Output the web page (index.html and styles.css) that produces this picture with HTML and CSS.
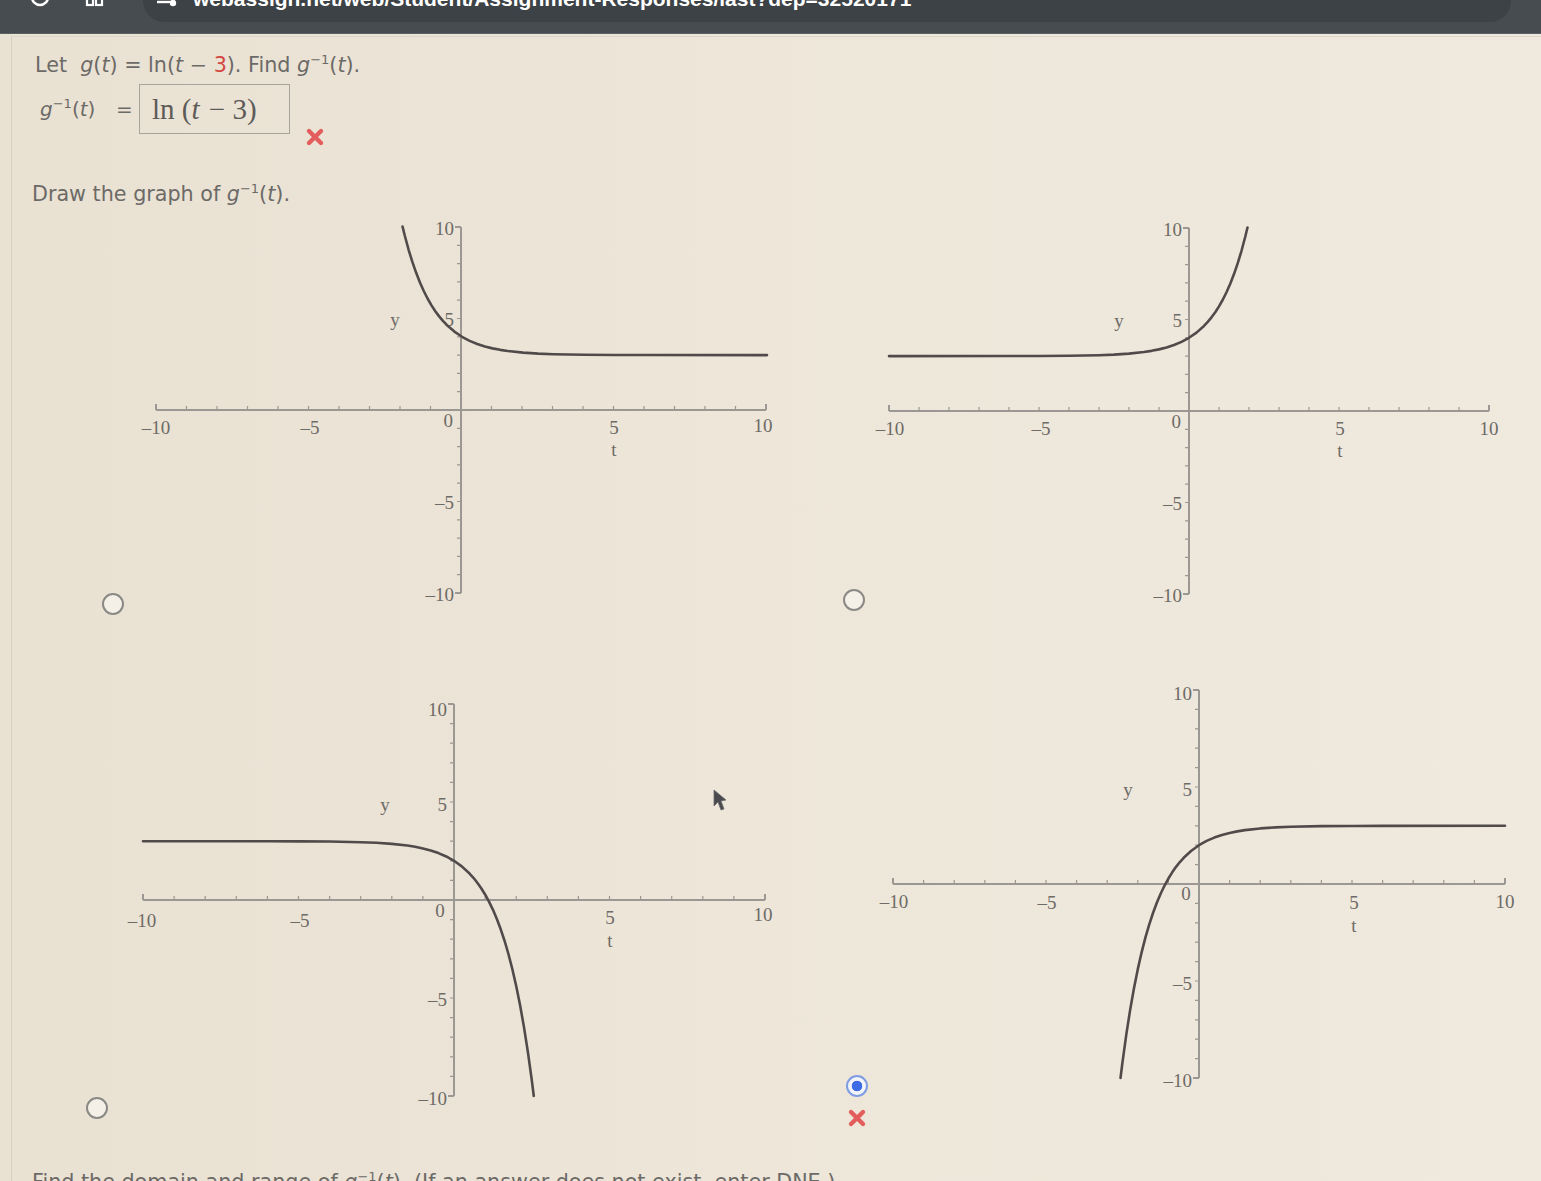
FILE: index.html
```html
<!DOCTYPE html>
<html lang="en">
<head>
<meta charset="utf-8">
<title>WebAssign</title>
<link rel="stylesheet" href="styles.css">
</head>
<body>
<header class="topbar">
  <svg class="tb-reload" width="24" height="33" viewBox="0 0 24 33"><circle cx="12" cy="-3" r="8" fill="none" stroke="#fff" stroke-width="2.6"/></svg>
  <svg class="tb-tabs" width="20" height="33" viewBox="0 0 20 33"><rect x="2" y="-8" width="6" height="13" fill="none" stroke="#fff" stroke-width="2.2"/><rect x="11" y="-8" width="6" height="13" fill="none" stroke="#fff" stroke-width="2.2"/></svg>
  <div class="address">
    <svg class="site-icon" width="26" height="42" viewBox="0 0 26 42"><path d="M4 22 H18" stroke="#fff" stroke-width="2.4"/><path d="M4 17 H14" stroke="#fff" stroke-width="2.4"/><circle cx="20" cy="23" r="3.2" fill="#fff"/></svg>
    <span class="url">webassign.net/web/Student/Assignment-Responses/last?dep=32520171</span>
  </div>
</header>

<main class="panel">
  <p class="q-line">Let &nbsp;<i>g</i>(<i>t</i>) = ln(<i>t</i> &minus; <span class="red">3</span>). Find <i>g</i><sup>&minus;1</sup>(<i>t</i>).</p>

  <div class="answer-row">
    <span class="answer-label"><i>g</i><sup>&minus;1</sup>(<i>t</i>) &nbsp;=</span>
    <span class="answer-box">ln (<i>t</i> &minus; 3)</span>
    <svg class="wrong wrong-first" width="20" height="20" viewBox="0 0 20 20"><path d="M4 4 L16 16 M16 4 L4 16" stroke="#e35d5d" stroke-width="4.4" stroke-linecap="round"/></svg>
  </div>

  <p class="q-line draw-line">Draw the graph of <i>g</i><sup>&minus;1</sup>(<i>t</i>).</p>

  <div class="options">
    <!-- Option 1 -->
    <div class="option opt1">
      <span class="radio"></span>
      <svg class="graph" width="660" height="400" viewBox="130 215 660 400">
        <g class="axis">
          <line x1="156" y1="410" x2="766" y2="410"/>
          <line x1="461" y1="227" x2="461" y2="593"/>
          <line x1="455" y1="227" x2="461" y2="227"/>
          <line x1="455" y1="593" x2="461" y2="593"/>
          <line x1="156" y1="404" x2="156" y2="410"/>
          <line x1="766" y1="404" x2="766" y2="410"/>
          <line class="ticks" x1="155.4" y1="408" x2="767" y2="408" stroke-dasharray="1.2 29.3"/>
          <line class="ticks" x1="459" y1="226.4" x2="459" y2="594" stroke-dasharray="1.2 17.1"/>
        </g>
        <g class="lbl">
          <text x="454" y="228" text-anchor="end">10</text>
          <text x="454" y="319" text-anchor="end">5</text>
          <text x="454" y="502" text-anchor="end">&ndash;5</text>
          <text x="454" y="594" text-anchor="end">&ndash;10</text>
          <text x="453" y="420" text-anchor="end">0</text>
          <text x="156" y="427" text-anchor="middle">&ndash;10</text>
          <text x="310" y="427" text-anchor="middle">&ndash;5</text>
          <text x="614" y="427" text-anchor="middle">5</text>
          <text x="763" y="425" text-anchor="middle">10</text>
          <text x="614" y="449" text-anchor="middle">t</text>
          <text x="395" y="319" text-anchor="middle">y</text>
        </g>
        <path class="curve" transform="translate(462,410) scale(30.5,-18.3)" d="M-1.95,10.03 L-1.875,9.521 L-1.75,8.755 L-1.625,8.078 L-1.5,7.482 L-1.375,6.955 L-1.25,6.490 L-1.125,6.080 L-1,5.718 L-0.875,5.399 L-0.75,5.117 L-0.625,4.868 L-0.5,4.649 L-0.25,4.284 L0,4 L0.25,3.779 L0.5,3.607 L0.75,3.472 L1,3.368 L1.25,3.287 L1.5,3.223 L2,3.135 L2.5,3.082 L3,3.050 L4,3.018 L5,3.007 L6,3.002 L10,3"/>
      </svg>
    </div>

    <!-- Option 2 -->
    <div class="option opt2">
      <span class="radio"></span>
      <svg class="graph" width="660" height="400" viewBox="870 215 660 400">
        <g class="axis">
          <line x1="889" y1="411" x2="1489" y2="411"/>
          <line x1="1189" y1="228" x2="1189" y2="594"/>
          <line x1="1183" y1="228" x2="1189" y2="228"/>
          <line x1="1183" y1="594" x2="1189" y2="594"/>
          <line x1="889" y1="405" x2="889" y2="411"/>
          <line x1="1489" y1="405" x2="1489" y2="411"/>
          <line class="ticks" x1="888.4" y1="409" x2="1490" y2="409" stroke-dasharray="1.2 28.8"/>
          <line class="ticks" x1="1187" y1="227.4" x2="1187" y2="595" stroke-dasharray="1.2 17.1"/>
        </g>
        <g class="lbl">
          <text x="1182" y="229" text-anchor="end">10</text>
          <text x="1182" y="320" text-anchor="end">5</text>
          <text x="1182" y="503" text-anchor="end">&ndash;5</text>
          <text x="1182" y="595" text-anchor="end">&ndash;10</text>
          <text x="1181" y="421" text-anchor="end">0</text>
          <text x="890" y="428" text-anchor="middle">&ndash;10</text>
          <text x="1041" y="428" text-anchor="middle">&ndash;5</text>
          <text x="1340" y="428" text-anchor="middle">5</text>
          <text x="1489" y="428" text-anchor="middle">10</text>
          <text x="1340" y="450" text-anchor="middle">t</text>
          <text x="1119" y="320" text-anchor="middle">y</text>
        </g>
        <path class="curve" transform="translate(1189,411) scale(-30,-18.3)" d="M-1.95,10.03 L-1.875,9.521 L-1.75,8.755 L-1.625,8.078 L-1.5,7.482 L-1.375,6.955 L-1.25,6.490 L-1.125,6.080 L-1,5.718 L-0.875,5.399 L-0.75,5.117 L-0.625,4.868 L-0.5,4.649 L-0.25,4.284 L0,4 L0.25,3.779 L0.5,3.607 L0.75,3.472 L1,3.368 L1.25,3.287 L1.5,3.223 L2,3.135 L2.5,3.082 L3,3.050 L4,3.018 L5,3.007 L6,3.002 L10,3"/>
      </svg>
    </div>

    <!-- Option 3 -->
    <div class="option opt3">
      <span class="radio"></span>
      <svg class="graph" width="675" height="440" viewBox="115 680 675 440">
        <g class="axis">
          <line x1="143" y1="900" x2="765" y2="900"/>
          <line x1="454" y1="704" x2="454" y2="1096"/>
          <line x1="448" y1="704" x2="454" y2="704"/>
          <line x1="448" y1="1096" x2="454" y2="1096"/>
          <line x1="143" y1="894" x2="143" y2="900"/>
          <line x1="765" y1="894" x2="765" y2="900"/>
          <line class="ticks" x1="142.4" y1="898" x2="766" y2="898" stroke-dasharray="1.2 29.9"/>
          <line class="ticks" x1="452" y1="703.4" x2="452" y2="1097" stroke-dasharray="1.2 18.4"/>
        </g>
        <g class="lbl">
          <text x="447" y="709" text-anchor="end">10</text>
          <text x="447" y="804" text-anchor="end">5</text>
          <text x="447" y="999" text-anchor="end">&ndash;5</text>
          <text x="447" y="1098" text-anchor="end">&ndash;10</text>
          <text x="440" y="910" text-anchor="middle">0</text>
          <text x="142" y="920" text-anchor="middle">&ndash;10</text>
          <text x="300" y="920" text-anchor="middle">&ndash;5</text>
          <text x="610" y="917" text-anchor="middle">5</text>
          <text x="763" y="914" text-anchor="middle">10</text>
          <text x="610" y="940" text-anchor="middle">t</text>
          <text x="385" y="804" text-anchor="middle">y</text>
        </g>
        <path class="curve" transform="translate(454,900) scale(-31.1,-19.6)" d="M-2.565,-10 L-2.5,-9.18 L-2.375,-7.75 L-2.25,-6.488 L-2.125,-5.373 L-2,-4.389 L-1.875,-3.521 L-1.75,-2.755 L-1.625,-2.078 L-1.5,-1.482 L-1.375,-0.955 L-1.25,-0.490 L-1.125,-0.080 L-1,0.282 L-0.875,0.601 L-0.75,0.883 L-0.625,1.132 L-0.5,1.351 L-0.25,1.716 L0,2 L0.25,2.221 L0.5,2.393 L0.75,2.528 L1,2.632 L1.25,2.713 L1.5,2.777 L2,2.865 L2.5,2.918 L3,2.950 L4,2.982 L5,2.993 L6,2.998 L10,3"/>
        <path class="cursor" d="M714 790 L714 806 L718 802 L721 810 L724 809 L721 801 L726 800 Z"/>
      </svg>
    </div>

    <!-- Option 4 -->
    <div class="option opt4">
      <span class="marks">
        <span class="radio selected"></span>
        <svg class="wrong" width="20" height="20" viewBox="0 0 20 20"><path d="M4 4 L16 16 M16 4 L4 16" stroke="#e35d5d" stroke-width="4.4" stroke-linecap="round"/></svg>
      </span>
      <svg class="graph" width="660" height="448" viewBox="870 680 660 448">
        <g class="axis">
          <line x1="893" y1="884" x2="1505" y2="884"/>
          <line x1="1199" y1="690" x2="1199" y2="1078"/>
          <line x1="1193" y1="690" x2="1199" y2="690"/>
          <line x1="1193" y1="1078" x2="1199" y2="1078"/>
          <line x1="893" y1="878" x2="893" y2="884"/>
          <line x1="1505" y1="878" x2="1505" y2="884"/>
          <line class="ticks" x1="892.4" y1="882" x2="1506" y2="882" stroke-dasharray="1.2 29.4"/>
          <line class="ticks" x1="1197" y1="689.4" x2="1197" y2="1079" stroke-dasharray="1.2 18.2"/>
        </g>
        <g class="lbl">
          <text x="1192" y="693" text-anchor="end">10</text>
          <text x="1192" y="789" text-anchor="end">5</text>
          <text x="1192" y="983" text-anchor="end">&ndash;5</text>
          <text x="1192" y="1080" text-anchor="end">&ndash;10</text>
          <text x="1186" y="893" text-anchor="middle">0</text>
          <text x="894" y="901" text-anchor="middle">&ndash;10</text>
          <text x="1047" y="902" text-anchor="middle">&ndash;5</text>
          <text x="1354" y="902" text-anchor="middle">5</text>
          <text x="1505" y="901" text-anchor="middle">10</text>
          <text x="1354" y="925" text-anchor="middle">t</text>
          <text x="1128" y="789" text-anchor="middle">y</text>
        </g>
        <path class="curve" transform="translate(1199,884) scale(30.6,-19.4)" d="M-2.565,-10 L-2.5,-9.18 L-2.375,-7.75 L-2.25,-6.488 L-2.125,-5.373 L-2,-4.389 L-1.875,-3.521 L-1.75,-2.755 L-1.625,-2.078 L-1.5,-1.482 L-1.375,-0.955 L-1.25,-0.490 L-1.125,-0.080 L-1,0.282 L-0.875,0.601 L-0.75,0.883 L-0.625,1.132 L-0.5,1.351 L-0.25,1.716 L0,2 L0.25,2.221 L0.5,2.393 L0.75,2.528 L1,2.632 L1.25,2.713 L1.5,2.777 L2,2.865 L2.5,2.918 L3,2.950 L4,2.982 L5,2.993 L6,2.998 L10,3"/>
      </svg>
    </div>
  </div>

  <p class="q-line next-line">Find the domain and range of <i>g</i><sup>&minus;1</sup>(<i>t</i>). (If an answer does not exist, enter DNE.)</p>
</main>
</body>
</html>
```

FILE: styles.css
```css
html, body {
  margin: 0;
  height: 100%;
  overflow: hidden;
}

body {
  background: linear-gradient(90deg, #e9e1d2 0%, #ede6d9 50%, #efe9de 100%);
  font-family: "DejaVu Sans", Verdana, sans-serif;
  color: #6c6a67;
}

/* ---------- browser bar ---------- */
.topbar {
  height: 33px;
  background: #464c50;
  display: flex;
  align-items: flex-start;
  overflow: hidden;
  border-bottom: 1px solid #5a6064;
}

.tb-reload { margin-left: 28px; flex: none; }
.tb-tabs { margin-left: 33px; flex: none; }

.address {
  margin-left: 38px;
  margin-right: 30px;
  margin-top: -20px;
  height: 42px;
  flex: 1;
  background: #3d4246;
  border-radius: 21px;
  display: flex;
  align-items: flex-start;
}

.site-icon { margin-left: 10px; flex: none; }

.url {
  margin-left: 14px;
  padding-top: 8px;
  font-family: "Liberation Sans", Arial, sans-serif;
  font-weight: bold;
  font-size: 21px;
  line-height: 22px;
  color: #ffffff;
  white-space: nowrap;
}

/* ---------- question panel ---------- */
.panel {
  margin: 2px 0 0 11px;
  border-top: 1px solid #dcd5c8;
  border-left: 1px solid #d6cebf;
  padding-left: 23px;
  height: 1200px;
}

.q-line {
  margin: 16px 0 0 0;
  font-size: 20.7px;
  line-height: 24px;
  white-space: nowrap;
}

.q-line i { font-style: italic; }

.q-line sup, .answer-label sup {
  font-size: 13px;
  line-height: 0;
  vertical-align: 8px;
}

.red { color: #d2473f; }

.answer-row {
  display: flex;
  align-items: center;
  margin-top: 7px;
}

.answer-label {
  width: 99px;
  padding-left: 5px;
  font-size: 20px;
  flex: none;
  white-space: nowrap;
  word-spacing: 4px;
}

.answer-box {
  box-sizing: border-box;
  width: 151px;
  height: 50px;
  border: 1px solid #a9a49b;
  padding-left: 12px;
  display: flex;
  align-items: center;
  font-family: "Liberation Serif", "Times New Roman", serif;
  font-size: 29px;
  color: #5d5b58;
  white-space: pre;
}

.answer-box i { margin: 0 2px 0 0; }

.wrong { flex: none; display: block; }

.wrong-first {
  align-self: flex-end;
  margin-left: 15px;
  margin-bottom: -13px;
}

.draw-line {
  margin-top: 48px;
  margin-left: -3px;
}

/* ---------- graph options ---------- */
.options {
  margin-top: 9px;
  margin-left: 50px;
  display: grid;
  grid-template-columns: 750px 750px;
  row-gap: 65px;
  align-items: start;
}

.option {
  display: flex;
  align-items: flex-end;
}

.radio {
  box-sizing: border-box;
  display: block;
  width: 22px;
  height: 22px;
  border-radius: 50%;
  border: 2px solid #8b8985;
  background: #f4f0e8;
  flex: none;
}

.radio.selected {
  border-color: #7f9ce2;
  background: radial-gradient(circle, #3d6ce4 0 5px, #f3f4fa 5.6px);
}

.opt1 .radio { margin: 0 6px 0 17px; }
.opt2 .radio { margin: 0 5px 4px 8px; }
.opt3 .radio { margin: 0 7px 1px 1px; }

.marks {
  display: flex;
  flex-direction: column;
  align-items: center;
  gap: 11px;
  margin: 0 2px 0 11px;
  flex: none;
}

.graph {
  display: block;
  flex: none;
  overflow: visible;
}

.axis line {
  stroke: #9b9893;
  stroke-width: 2;
}

.axis line.ticks {
  stroke-width: 4;
}

.lbl text {
  font-family: "Liberation Serif", "Times New Roman", serif;
  font-size: 19px;
  fill: #6e6b67;
  dominant-baseline: central;
}

.curve {
  fill: none;
  stroke: #514a4a;
  stroke-width: 2.6;
  stroke-linejoin: round;
  stroke-linecap: round;
  vector-effect: non-scaling-stroke;
}

.cursor {
  fill: #4a4a4e;
  stroke: #6a6a6e;
  stroke-width: 0.8;
}

.next-line {
  margin-top: 42px;
  margin-left: -3px;
}
```
